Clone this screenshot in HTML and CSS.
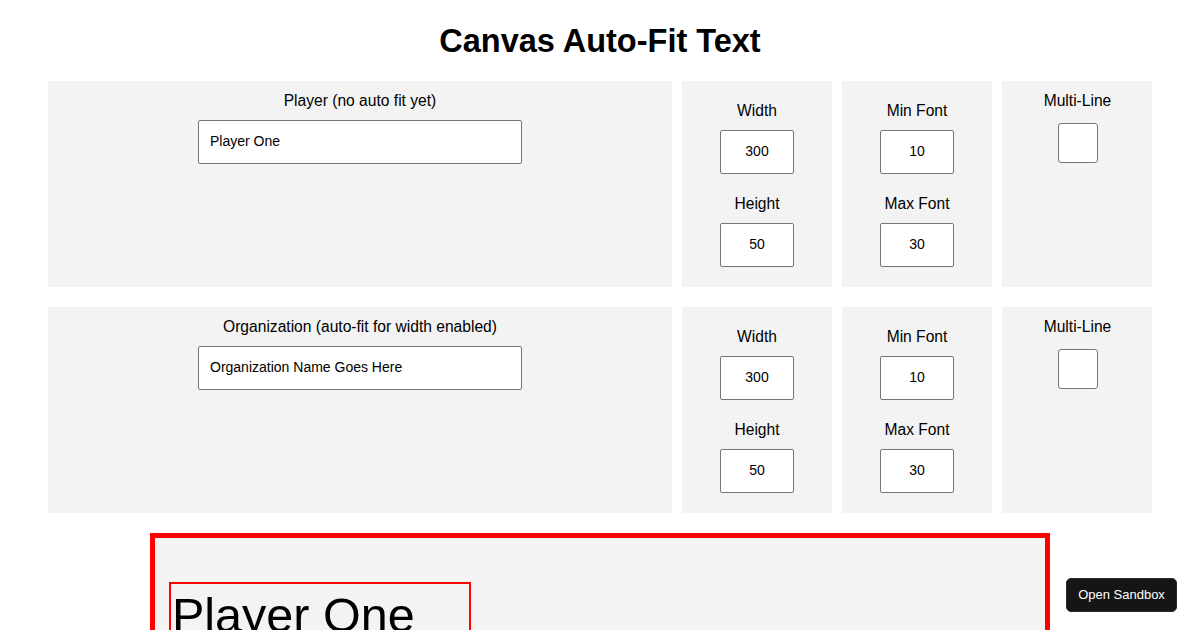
FILE: index.html
```html
<!DOCTYPE html>
<html>
<head>
<meta charset="utf-8">
<link rel="stylesheet" href="styles.css">
</head>
<body>
<h1 class="title">Canvas Auto-Fit Text</h1>
<div class="controls">
  <div class="row">
    <div class="panel text-panel">
      <label class="lbl">Player (no auto fit yet)</label>
      <input class="text-input" type="text" value="Player One">
    </div>
    <div class="panel num-panel">
      <label class="lbl">Width</label>
      <input class="num-input" type="text" value="300">
      <label class="lbl lbl-second">Height</label>
      <input class="num-input" type="text" value="50">
    </div>
    <div class="panel num-panel">
      <label class="lbl">Min Font</label>
      <input class="num-input" type="text" value="10">
      <label class="lbl lbl-second">Max Font</label>
      <input class="num-input" type="text" value="30">
    </div>
    <div class="panel check-panel">
      <label class="lbl">Multi-Line</label>
      <input class="check" type="checkbox">
    </div>
  </div>
  <div class="row">
    <div class="panel text-panel">
      <label class="lbl">Organization (auto-fit for width enabled)</label>
      <input class="text-input" type="text" value="Organization Name Goes Here">
    </div>
    <div class="panel num-panel">
      <label class="lbl">Width</label>
      <input class="num-input" type="text" value="300">
      <label class="lbl lbl-second">Height</label>
      <input class="num-input" type="text" value="50">
    </div>
    <div class="panel num-panel">
      <label class="lbl">Min Font</label>
      <input class="num-input" type="text" value="10">
      <label class="lbl lbl-second">Max Font</label>
      <input class="num-input" type="text" value="30">
    </div>
    <div class="panel check-panel">
      <label class="lbl">Multi-Line</label>
      <input class="check" type="checkbox">
    </div>
  </div>
</div>
<div class="canvas">
  <div class="text-box"><span class="fit-text">Player One</span></div>
</div>
<button class="sandbox">Open Sandbox</button>
</body>
</html>
```

FILE: styles.css
```css
html, body {
  margin: 0;
  padding: 0;
  background: #ffffff;
  font-family: "Liberation Sans", Arial, sans-serif;
  color: #000;
}
body {
  padding-top: 3px;
}
.title {
  font-size: 32.5px;
  font-weight: bold;
  text-align: center;
  margin: 20px 0 21px;
  line-height: 37px;
}
.controls {
  width: 1104px;
  margin: 0 auto;
  display: flex;
  flex-direction: column;
  gap: 20px;
}
.row {
  display: flex;
  gap: 10px;
  height: 206px;
}
.panel {
  background: #f3f3f3;
  display: flex;
  flex-direction: column;
  align-items: center;
  box-sizing: border-box;
}
.text-panel {
  flex: 1;
  padding-top: 11px;
}
.num-panel {
  width: 150px;
  padding-top: 21px;
}
.check-panel {
  width: 150px;
  padding-top: 11px;
  padding-left: 1px;
}
.lbl {
  font-size: 15.6px;
  line-height: 18px;
  display: block;
}
.lbl-second {
  margin-top: 21px;
}
.text-input {
  margin-top: 10px;
  width: 324px;
  height: 44px;
  box-sizing: border-box;
  border: 1px solid #767676;
  border-radius: 2px;
  padding: 0 11px 2px;
  font-family: "Liberation Sans", Arial, sans-serif;
  font-size: 14px;
  color: #000;
  background: #fff;
  outline: none;
}
.num-input {
  margin-top: 10px;
  width: 74px;
  height: 44px;
  box-sizing: border-box;
  border: 1px solid #767676;
  border-radius: 2px;
  padding: 0 0 2px;
  text-align: center;
  font-family: "Liberation Sans", Arial, sans-serif;
  font-size: 14px;
  color: #000;
  background: #fff;
  outline: none;
}
.check {
  appearance: none;
  -webkit-appearance: none;
  margin: 13px 0 0;
  width: 40px;
  height: 40px;
  box-sizing: border-box;
  border: 1px solid #767676;
  border-radius: 3px;
  background: #fff;
}
.canvas {
  width: 900px;
  height: 300px;
  margin: 20px auto 0;
  box-sizing: border-box;
  border: 5px solid #ff0000;
  background: #f3f3f3;
  padding: 44px 0 0 14px;
}
.text-box {
  width: 302px;
  height: 100px;
  box-sizing: border-box;
  border: 2px solid #ff0000;
  overflow: hidden;
}
.fit-text {
  display: block;
  font-family: "Liberation Sans", Arial, sans-serif;
  font-size: 48.5px;
  line-height: 48px;
  padding: 7px 0 0 1px;
  color: #000;
}
.sandbox {
  position: fixed;
  right: 23px;
  bottom: 18px;
  width: 111px;
  height: 34px;
  background: #151515;
  color: #ffffff;
  border: 1px solid #2a2a2a;
  border-radius: 5px;
  font-family: "Liberation Sans", Arial, sans-serif;
  font-size: 13px;
  padding: 0 0 2px;
}
```
